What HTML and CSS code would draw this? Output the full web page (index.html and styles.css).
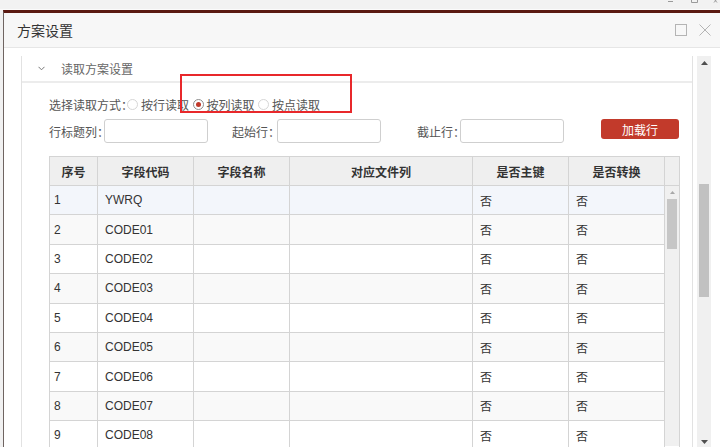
FILE: index.html
```html
<!DOCTYPE html>
<html lang="zh-CN">
<head>
<meta charset="utf-8">
<title>方案设置</title>
<link rel="stylesheet" href="styles.css">
</head>
<body>
<div class="bgbar">
  <svg class="wctl" width="60" height="9" viewBox="0 0 60 9">
    <path d="M8 1.5H13" stroke="#9a9a9a" stroke-width="1"/>
    <path d="M31.5 -3V2.5H37.5V-3" fill="none" stroke="#9a9a9a" stroke-width="1"/>
    <path d="M54 -1L57 2.5M57 -1L54 2.5" stroke="#9a9a9a" stroke-width="1"/>
  </svg>
</div>
<div class="dialog">
  <div class="titlebar">
    <span class="title">方案设置</span>
    <span class="tb-icons">
      <svg class="ico" width="12" height="12" viewBox="0 0 12 12"><rect x="0.5" y="0.5" width="11" height="11" fill="none" stroke="#b4b4b4" stroke-width="1"/></svg>
      <svg class="ico" width="12" height="12" viewBox="0 0 12 12"><path d="M0.5 0.5L11.5 11.5M11.5 0.5L0.5 11.5" stroke="#b4b4b4" stroke-width="1"/></svg>
    </span>
  </div>
  <div class="content">
    <div class="panel">
      <div class="panel-head">
        <svg class="chev" width="7" height="5" viewBox="0 0 7 5"><path d="M0.5 0.8L3.5 3.8L6.5 0.8" fill="none" stroke="#777" stroke-width="1"/></svg>
        <span class="panel-title">读取方案设置</span>
      </div>
      <div class="panel-body">
        <div class="row-radio">
          <span class="lbl lbl-mode">选择读取方式：</span>
          <label class="radio"><span class="circle"></span><span class="rtext">按行读取</span></label>
          <label class="radio"><span class="circle on"></span><span class="rtext">按列读取</span></label>
          <label class="radio"><span class="circle"></span><span class="rtext">按点读取</span></label>
        </div>
        <div class="row-inputs">
          <span class="lbl lbl-a">行标题列：</span>
          <span class="inp"></span>
          <span class="lbl lbl-b">起始行：</span>
          <span class="inp"></span>
          <span class="lbl lbl-c">截止行：</span>
          <span class="inp"></span>
          <span class="btn">加载行</span>
        </div>
        <div class="grid">
          <div class="ghead">
            <div class="th">序号</div>
            <div class="th">字段代码</div>
            <div class="th">字段名称</div>
            <div class="th">对应文件列</div>
            <div class="th">是否主键</div>
            <div class="th">是否转换</div>
            <div class="th th-sb"></div>
          </div>
          <div class="gbody">
            <div class="rows">
              <div class="tr sel"><div class="td n">1</div><div class="td">YWRQ</div><div class="td"></div><div class="td"></div><div class="td">否</div><div class="td">否</div></div>
              <div class="tr alt"><div class="td n">2</div><div class="td">CODE01</div><div class="td"></div><div class="td"></div><div class="td">否</div><div class="td">否</div></div>
              <div class="tr"><div class="td n">3</div><div class="td">CODE02</div><div class="td"></div><div class="td"></div><div class="td">否</div><div class="td">否</div></div>
              <div class="tr alt"><div class="td n">4</div><div class="td">CODE03</div><div class="td"></div><div class="td"></div><div class="td">否</div><div class="td">否</div></div>
              <div class="tr"><div class="td n">5</div><div class="td">CODE04</div><div class="td"></div><div class="td"></div><div class="td">否</div><div class="td">否</div></div>
              <div class="tr alt"><div class="td n">6</div><div class="td">CODE05</div><div class="td"></div><div class="td"></div><div class="td">否</div><div class="td">否</div></div>
              <div class="tr"><div class="td n">7</div><div class="td">CODE06</div><div class="td"></div><div class="td"></div><div class="td">否</div><div class="td">否</div></div>
              <div class="tr alt"><div class="td n">8</div><div class="td">CODE07</div><div class="td"></div><div class="td"></div><div class="td">否</div><div class="td">否</div></div>
              <div class="tr"><div class="td n">9</div><div class="td">CODE08</div><div class="td"></div><div class="td"></div><div class="td">否</div><div class="td">否</div></div>
              <div class="tr alt"><div class="td n">10</div><div class="td">CODE09</div><div class="td"></div><div class="td"></div><div class="td">否</div><div class="td">否</div></div>
            </div>
            <div class="gscroll">
              <div class="gs-up"><svg width="5" height="3" viewBox="0 0 5 3"><path d="M0 3L2.5 0L5 3Z" fill="#a8a8a8"/></svg></div>
              <div class="gs-thumb"></div>
            </div>
          </div>
        </div>
      </div>
    </div>
    <div class="vscroll">
      <div class="vs-up"><svg width="7" height="4" viewBox="0 0 7 4"><path d="M0 4L3.5 0L7 4Z" fill="#505050"/></svg></div>
      <div class="vs-thumb"></div>
      <div class="vs-fill"></div>
      <div class="vs-down"><svg width="7" height="4" viewBox="0 0 7 4"><path d="M0 0L3.5 4L7 0Z" fill="#505050"/></svg></div>
    </div>
  </div>
</div>
<div class="annot"></div>
</body>
</html>
```

FILE: styles.css
```css
* { box-sizing: border-box; }
html, body { margin: 0; padding: 0; }
body {
  width: 720px;
  height: 447px;
  overflow: hidden;
  position: relative;
  background: #f1f1f1;
  font-family: "Liberation Sans", "Noto Sans CJK SC", sans-serif;
  font-size: 12px;
  color: #333;
}

.bgbar {
  height: 10px;
  display: flex;
  justify-content: flex-end;
  border-bottom: 1px solid #fbfbfb;
  background: #f2f2f2;
}
.wctl { display: block; }

.dialog {
  margin-left: 3px;
  height: 437px;
  background: #fff;
  border-top: 3px solid #5a1911;
  border-left: 1px solid #6f6461;
}

.titlebar {
  height: 35px;
  background: #f7f7f7;
  border-bottom: 1px solid #e6e6e6;
  display: flex;
  align-items: center;
  justify-content: space-between;
  padding: 0 9px 0 13px;
}
.title {
  font-family: "Noto Sans CJK SC", sans-serif;
  font-size: 14px;
  color: #333;
}
.tb-icons { display: flex; gap: 12px; }
.ico { display: block; }

.content {
  display: flex;
  padding-top: 8px;
  height: 399px;
}

.panel {
  margin-left: 17px;
  width: 672px;
  border-left: 1px solid #e2e2e2;
  border-right: 1px solid #e2e2e2;
}
.panel-head {
  height: 27px;
  border-bottom: 2px solid #ececec;
  display: flex;
  align-items: center;
  padding-left: 16px;
}
.chev { display: block; }
.panel-title {
  margin-left: 16px;
  font-family: "Noto Sans CJK SC", sans-serif;
  font-size: 12px;
  color: #666;
}

.panel-body { padding: 11px 0 0 27px; }

.lbl {
  font-family: "Noto Sans CJK SC", sans-serif;
  font-size: 12px;
  color: #555;
  white-space: nowrap;
  flex: none;
}
.lbl-mode { width: 78px; }
.lbl-a { width: 55px; }
.lbl-b { width: 45px; margin-left: 24px; }
.lbl-c { width: 43px; margin-left: 36px; }

.row-radio {
  height: 20px;
  display: flex;
  align-items: center;
}
.radio {
  display: flex;
  align-items: center;
  margin-right: 3.5px;
}
.circle {
  width: 11px;
  height: 11px;
  border-radius: 50%;
  border: 1px solid #d6d6d6;
  background: #fff;
  margin-right: 3px;
  display: flex;
  align-items: center;
  justify-content: center;
}
.circle.on { border-color: #8e8e8e; }
.circle.on::after {
  content: "";
  width: 5px;
  height: 5px;
  border-radius: 50%;
  background: #c0392b;
}
.rtext {
  font-family: "Noto Sans CJK SC", sans-serif;
  font-size: 12px;
  color: #555;
}

.row-inputs {
  margin-top: 5px;
  height: 24px;
  display: flex;
  align-items: center;
}
.inp {
  width: 104px;
  height: 24px;
  border: 1px solid #cfcfcf;
  border-radius: 3px;
  background: #fff;
  flex: none;
}
.btn {
  align-self: flex-start;
  margin-left: 37px;
  width: 78px;
  height: 20px;
  border-radius: 3px;
  background: #c23a2b;
  color: #fff;
  font-family: "Noto Sans CJK SC", sans-serif;
  font-size: 12px;
  display: flex;
  align-items: center;
  justify-content: center;
}

.grid {
  margin-top: 13px;
  width: 631px;
  border: 1px solid #d4d4d4;
  border-bottom: none;
}
.ghead {
  display: grid;
  grid-template-columns: 48px 96px 96px 183px 96px 96px 14px;
  height: 29px;
  background: #efefef;
  border-bottom: 1px solid #d4d4d4;
}
.th {
  border-right: 1px solid #d4d4d4;
  display: flex;
  align-items: center;
  justify-content: center;
  font-family: "Noto Sans CJK SC", sans-serif;
  font-weight: bold;
  font-size: 12px;
  color: #333;
}
.th-sb { border-right: none; }

.gbody { display: flex; }
.rows { width: 615px; }
.tr {
  display: grid;
  grid-template-columns: 48px 96px 96px 183px 96px 96px;
  height: 29.4px;
  border-bottom: 1px solid #d4d4d4;
  background: #fff;
}
.tr.alt { background: #f9f9f9; }
.tr.sel { background: #f3f6fb; }
.td {
  border-right: 1px solid #d4d4d4;
  display: flex;
  align-items: center;
  padding-left: 7px;
  font-size: 12px;
  color: #333;
}
.td.n { padding-left: 4px; }

.gscroll {
  width: 14px;
  background: #f0f0f0;
  height: 260px;
}
.gs-up {
  height: 13px;
  display: flex;
  align-items: center;
  justify-content: center;
}
.gs-up svg { display: block; }
.gs-thumb {
  margin-left: 2px;
  width: 10px;
  height: 50px;
  background: #c6c6c6;
}

.vscroll {
  margin-left: 4px;
  width: 14px;
  background: #f0f0f0;
  display: flex;
  flex-direction: column;
}
.vs-up, .vs-down {
  height: 14px;
  display: flex;
  align-items: center;
  justify-content: center;
  flex: none;
}
.vs-up svg, .vs-down svg { display: block; }
.vs-thumb {
  margin: 114px 0 0 2px;
  width: 10px;
  height: 113px;
  background: #c1c1c1;
  flex: none;
}
.vs-fill { flex: 1; }
.vs-down { align-items: flex-end; padding-bottom: 3px; }

.annot {
  position: absolute;
  left: 180px;
  top: 74px;
  width: 172px;
  height: 39px;
  border: 2px solid #e8282b;
}
```
